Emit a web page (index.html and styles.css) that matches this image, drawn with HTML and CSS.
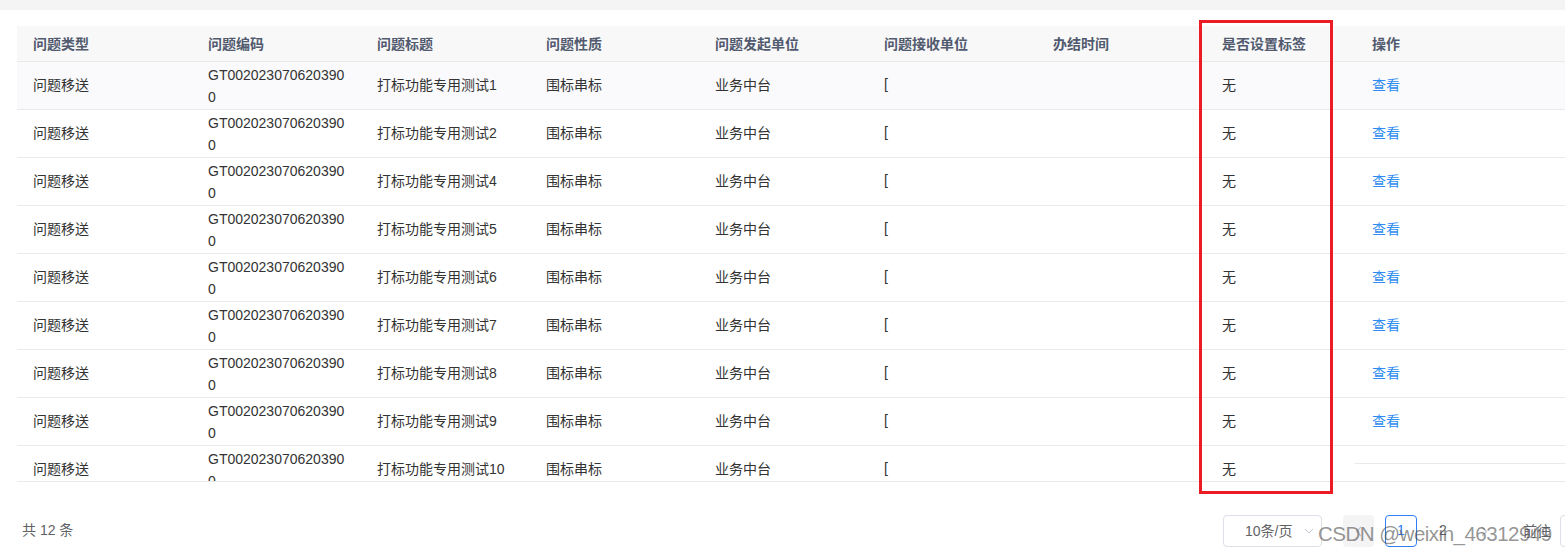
FILE: index.html
```html
<!DOCTYPE html>
<html lang="zh-CN">
<head>
<meta charset="utf-8">
<title>问题列表</title>
<link rel="stylesheet" href="styles.css">
</head>
<body>
<div class="topbar"></div>
<div class="card">
  <div class="table">
    <div class="thead row">
      <div class="cell">问题类型</div>
      <div class="cell">问题编码</div>
      <div class="cell">问题标题</div>
      <div class="cell">问题性质</div>
      <div class="cell">问题发起单位</div>
      <div class="cell">问题接收单位</div>
      <div class="cell">办结时间</div>
      <div class="cell">是否设置标签</div>
      <div class="cell">操作</div>
    </div>
    <div class="tbody">
      <div class="row tr hover">
        <div class="cell">问题移送</div><div class="cell code">GT0020230706203900</div><div class="cell">打标功能专用测试1</div><div class="cell">围标串标</div><div class="cell">业务中台</div><div class="cell">[</div><div class="cell"></div><div class="cell">无</div><div class="cell"><a class="link">查看</a></div>
      </div>
      <div class="row tr">
        <div class="cell">问题移送</div><div class="cell code">GT0020230706203900</div><div class="cell">打标功能专用测试2</div><div class="cell">围标串标</div><div class="cell">业务中台</div><div class="cell">[</div><div class="cell"></div><div class="cell">无</div><div class="cell"><a class="link">查看</a></div>
      </div>
      <div class="row tr">
        <div class="cell">问题移送</div><div class="cell code">GT0020230706203900</div><div class="cell">打标功能专用测试4</div><div class="cell">围标串标</div><div class="cell">业务中台</div><div class="cell">[</div><div class="cell"></div><div class="cell">无</div><div class="cell"><a class="link">查看</a></div>
      </div>
      <div class="row tr">
        <div class="cell">问题移送</div><div class="cell code">GT0020230706203900</div><div class="cell">打标功能专用测试5</div><div class="cell">围标串标</div><div class="cell">业务中台</div><div class="cell">[</div><div class="cell"></div><div class="cell">无</div><div class="cell"><a class="link">查看</a></div>
      </div>
      <div class="row tr">
        <div class="cell">问题移送</div><div class="cell code">GT0020230706203900</div><div class="cell">打标功能专用测试6</div><div class="cell">围标串标</div><div class="cell">业务中台</div><div class="cell">[</div><div class="cell"></div><div class="cell">无</div><div class="cell"><a class="link">查看</a></div>
      </div>
      <div class="row tr">
        <div class="cell">问题移送</div><div class="cell code">GT0020230706203900</div><div class="cell">打标功能专用测试7</div><div class="cell">围标串标</div><div class="cell">业务中台</div><div class="cell">[</div><div class="cell"></div><div class="cell">无</div><div class="cell"><a class="link">查看</a></div>
      </div>
      <div class="row tr">
        <div class="cell">问题移送</div><div class="cell code">GT0020230706203900</div><div class="cell">打标功能专用测试8</div><div class="cell">围标串标</div><div class="cell">业务中台</div><div class="cell">[</div><div class="cell"></div><div class="cell">无</div><div class="cell"><a class="link">查看</a></div>
      </div>
      <div class="row tr">
        <div class="cell">问题移送</div><div class="cell code">GT0020230706203900</div><div class="cell">打标功能专用测试9</div><div class="cell">围标串标</div><div class="cell">业务中台</div><div class="cell">[</div><div class="cell"></div><div class="cell">无</div><div class="cell"><a class="link">查看</a></div>
      </div>
      <div class="row tr">
        <div class="cell">问题移送</div><div class="cell code">GT0020230706203900</div><div class="cell">打标功能专用测试10</div><div class="cell">围标串标</div><div class="cell">业务中台</div><div class="cell">[</div><div class="cell"></div><div class="cell">无</div><div class="cell cut"></div>
      </div>
    </div>
  </div>

  <div class="pager">
    <span class="total">共 12 条</span>
    <div class="right">
      <div class="sizes">
        <span class="label">10条/页</span>
        <svg class="arrow" width="10" height="6" viewBox="0 0 10 6"><path d="M1 1 L5 5 L9 1" fill="none" stroke="#c0c4cc" stroke-width="1"/></svg>
      </div>
      <button class="btn prev" type="button">
        <svg width="7" height="11" viewBox="0 0 7 11"><path d="M6 1 L1.5 5.5 L6 10" fill="none" stroke="#c0c4cc" stroke-width="1.2"/></svg>
      </button>
      <span class="num active">1</span>
      <span class="num">2</span>
      <button class="btn next" type="button">
        <svg width="7" height="11" viewBox="0 0 7 11"><path d="M1 1 L5.5 5.5 L1 10" fill="none" stroke="#c0c4cc" stroke-width="1.2"/></svg>
      </button>
      <span class="goto">前往</span>
      <span class="jump"></span>
    </div>
  </div>
</div>

<div class="mark"></div>
<div class="watermark">CSDN @weixin_46312949</div>
</body>
</html>
```

FILE: styles.css
```css
* { box-sizing: border-box; }

html, body {
  margin: 0;
  padding: 0;
  background: #fff;
  overflow: hidden;
}

body {
  font-family: "Liberation Sans", "Noto Sans CJK SC", sans-serif;
  font-size: 14px;
  color: #333;
  width: 1565px;
  height: 554px;
  position: relative;
}

.topbar {
  height: 10px;
  background: #f4f4f5;
}

.card {
  padding: 16px 0 0 17px;
}

.row {
  display: grid;
  grid-template-columns: 175px 169px 169px 169px 169px 169px 169px 150px 1fr;
}

.cell {
  padding: 0 16px 3px;
  display: flex;
  align-items: center;
  white-space: nowrap;
}

.thead {
  height: 36px;
  background: #f8f8f9;
  border-bottom: 1px solid #e8eaec;
  color: #515a6e;
  font-weight: bold;
}

.thead .cell {
  padding-bottom: 2px;
}

.tbody {
  height: 420px;
  overflow: hidden;
  border-bottom: 1px solid #e8eaec;
}

.tr {
  height: 48px;
  border-bottom: 1px solid #e8eaec;
  background: #fff;
}

.tr.hover {
  background: #fafafc;
}

.code {
  padding-bottom: 0;
  white-space: normal;
  word-break: break-all;
  line-height: 22px;
}

.link {
  color: #2d8cf0;
  cursor: pointer;
}

.cut {
  position: relative;
}

.cut::after {
  content: "";
  position: absolute;
  left: -1px;
  right: 0;
  top: 17px;
  height: 1px;
  background: #e8eaec;
}

.pager {
  display: flex;
  align-items: center;
  height: 32px;
  margin: 33px -41px 0 5px;
  color: #606266;
}

.total {
  font-size: 14px;
  padding-bottom: 4px;
}

.right {
  margin-left: auto;
  display: flex;
  align-items: center;
}

.sizes {
  width: 99px;
  height: 32px;
  border: 1px solid #dcdfe6;
  border-radius: 4px;
  display: flex;
  align-items: center;
  padding-left: 21px;
  gap: 12px;
  color: #606266;
  margin-right: 21px;
}

.label {
  padding-bottom: 3px;
}

.btn {
  width: 31px;
  height: 32px;
  border: none;
  border-radius: 4px;
  background: #fff;
  padding: 0;
  display: flex;
  align-items: center;
  justify-content: center;
}

.prev {
  background: #f4f4f5;
  margin-right: 11px;
}

.next {
  margin-right: 23px;
}

.num {
  width: 32px;
  height: 32px;
  border-radius: 4px;
  display: flex;
  align-items: center;
  justify-content: center;
  margin-right: 10px;
  color: #606266;
  font-size: 14px;
  padding-bottom: 3px;
}

.num.active {
  border: 1px solid #2f7ef5;
  color: #2f7ef5;
}

.goto {
  margin-right: 9px;
  font-size: 14px;
  padding-bottom: 3px;
}

.jump {
  width: 46px;
  height: 32px;
  border: 1px solid #dcdfe6;
  border-radius: 4px;
}

.mark {
  position: absolute;
  left: 1199px;
  top: 20px;
  width: 134px;
  height: 474px;
  border: 3px solid #ec1c24;
}

.watermark {
  position: absolute;
  left: 1318px;
  top: 524px;
  font-family: "Liberation Sans", sans-serif;
  font-size: 20.5px;
  letter-spacing: -0.5px;
  line-height: 1;
  color: rgba(80, 80, 80, 0.62);
  white-space: nowrap;
}
```
